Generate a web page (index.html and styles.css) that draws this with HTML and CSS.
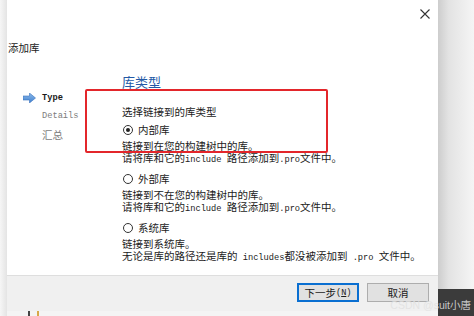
FILE: index.html
```html
<!DOCTYPE html>
<html lang="zh-CN">
<head>
    <meta charset="UTF-8">
    <title>添加库</title>
    <link rel="stylesheet" href="styles.css">
</head>
<body>

    <div class="screen">
        <div class="gutter"></div>

        <div class="column">
            <div class="dialog">
                <div class="titlebar">
                    <svg class="close" width="10" height="10" viewBox="0 0 10 10">
                        <path d="M0.5 0.5 L9.5 9.5 M9.5 0.5 L0.5 9.5" stroke="#333" stroke-width="1.1" fill="none"/>
                    </svg>
                </div>

                <div class="heading">添加库</div>

                <div class="main">
                    <div class="nav">
                        <div class="nav-item current">
                            <svg class="arrow" width="13" height="10" viewBox="0 0 13 10">
                                <defs>
                                    <linearGradient id="ag" x1="0" y1="0" x2="0" y2="1">
                                        <stop offset="0" stop-color="#8dbbea"/>
                                        <stop offset="1" stop-color="#3f7fcf"/>
                                    </linearGradient>
                                </defs>
                                <polygon points="0,3 6.5,3 6.5,0 12.5,5 6.5,10 6.5,7 0,7" fill="url(#ag)" stroke="#3a72bd" stroke-width="0.6"/>
                            </svg>
                            <span class="mono bold">Type</span>
                        </div>
                        <div class="nav-item muted"><span class="mono">Details</span></div>
                        <div class="nav-item muted">汇总</div>
                    </div>

                    <div class="content">
                        <div class="page-title">库类型</div>
                        <div class="prompt">选择链接到的库类型</div>

                        <div class="option">
                            <div class="radio-row"><span class="radio checked"></span>内部库</div>
                            <div class="desc">
                                链接到在您的构建树中的库。<br>
                                请将库和它的<span class="mono">include </span>路径添加到<span class="mono">.pro</span>文件中。
                            </div>
                        </div>

                        <div class="option">
                            <div class="radio-row"><span class="radio"></span>外部库</div>
                            <div class="desc">
                                链接到不在您的构建树中的库。<br>
                                请将库和它的<span class="mono">include </span>路径添加到<span class="mono">.pro</span>文件中。
                            </div>
                        </div>

                        <div class="option">
                            <div class="radio-row"><span class="radio"></span>系统库</div>
                            <div class="desc">
                                链接到系统库。<br>
                                无论是库的路径还是库的<span class="mono"> includes</span>都没被添加到<span class="mono"> .pro </span>文件中。
                            </div>
                        </div>
                    </div>
                </div>

                <div class="footer">
                    <button class="btn default">下一步<span class="mono">(<u>N</u>)</span></button>
                    <button class="btn">取消</button>
                </div>

                <div class="highlight"></div>
            </div>

            <div class="under">
                <span class="mark dark"></span>
                <span class="mark gold"></span>
            </div>
        </div>

        <div class="side">
            <div class="shade"></div>
            <div class="taskbar"></div>
        </div>

        <div class="watermark">CSDN @suit小唐</div>
    </div>

</body>
</html>
```

FILE: styles.css
```css
* {
    margin: 0;
    padding: 0;
    box-sizing: border-box;
}

body {
    font-family: "Noto Sans CJK SC", "DejaVu Sans", sans-serif;
    font-size: 10.5px;
    color: #1b1b1b;
    background: #f3f3f3;
    width: 474px;
    height: 316px;
    overflow: hidden;
}

.mono {
    font-family: "Liberation Mono", "DejaVu Sans Mono", monospace;
    font-size: 8.7px;
}

.bold {
    font-weight: bold;
}

.screen {
    position: relative;
    display: flex;
    width: 474px;
    height: 316px;
}

.gutter {
    width: 7px;
    background: linear-gradient(to right, #f6f6f6, #e4e4e4);
}

.column {
    width: 431px;
    display: flex;
    flex-direction: column;
}

.dialog {
    position: relative;
    height: 311px;
    background: #fff;
    display: flex;
    flex-direction: column;
}

.titlebar {
    height: 30px;
    display: flex;
    justify-content: flex-end;
    align-items: flex-start;
    padding: 9px 8px 0 0;
}

.heading {
    margin-top: 12px;
    padding-left: 1px;
    line-height: 12px;
    height: 12px;
}

.main {
    flex: 1;
    display: flex;
    margin-top: 21px;
}

.nav {
    width: 115px;
    padding: 14px 0 0 16px;
}

.nav-item {
    display: flex;
    align-items: center;
    height: 18px;
    padding-left: 19px;
}

.nav-item.current {
    padding-left: 0;
    color: #1a1a1a;
}

.arrow {
    margin-right: 6px;
}

.muted {
    color: #7c7c7c;
}

.content {
    flex: 1;
}

.page-title {
    font-size: 13px;
    line-height: 14px;
    color: #2459a6;
}

.prompt {
    margin-top: 16.5px;
    line-height: 12px;
}

.option {
    margin-top: 5px;
}

.option:first-of-type {
    margin-top: 6px;
}

.radio-row {
    display: flex;
    align-items: center;
    height: 14px;
    padding-left: 1px;
}

.radio {
    width: 10px;
    height: 10px;
    border: 1px solid #333;
    border-radius: 50%;
    margin-right: 5px;
    display: flex;
    justify-content: center;
    align-items: center;
}

.radio.checked::after {
    content: "";
    width: 4px;
    height: 4px;
    border-radius: 50%;
    background: #222;
}

.desc {
    margin-top: 3px;
    line-height: 12.5px;
}

.footer {
    height: 36px;
    background: #f0f0f0;
    border-top: 1px solid #dedede;
    display: flex;
    justify-content: flex-end;
    align-items: flex-start;
    gap: 8px;
    padding: 7px 9px 0 0;
}

.btn {
    width: 62px;
    height: 19px;
    font-family: "Noto Sans CJK SC", sans-serif;
    font-size: 10.5px;
    color: #1b1b1b;
    background: #e1e1e1;
    border: 1px solid #adadad;
    display: flex;
    justify-content: center;
    align-items: center;
}

.btn.default {
    border: 2px solid #0a6fd1;
}

.highlight {
    position: absolute;
    left: 78px;
    top: 89px;
    width: 243px;
    height: 64px;
    border: 2px solid #e3262b;
    border-radius: 2px;
}

.under {
    flex: 1;
    background: #f4f4f4;
    display: flex;
    align-items: stretch;
    padding-left: 21px;
    gap: 7px;
}

.mark {
    width: 2px;
}

.mark.dark {
    background: #444;
}

.mark.gold {
    background: #d7a84a;
}

.side {
    flex: 1;
    display: flex;
    flex-direction: column;
}

.shade {
    flex: 1;
    background: linear-gradient(to right, #cdcdcd, #e3e3e3 30%, #f5f5f5 100%);
}

.taskbar {
    height: 27px;
    background: #3b3b3b;
}

.watermark {
    position: absolute;
    right: 3px;
    bottom: 4px;
    font-family: "Liberation Sans", "Noto Sans CJK SC", sans-serif;
    font-size: 10.5px;
    color: rgba(225, 225, 225, 0.85);
}
```
